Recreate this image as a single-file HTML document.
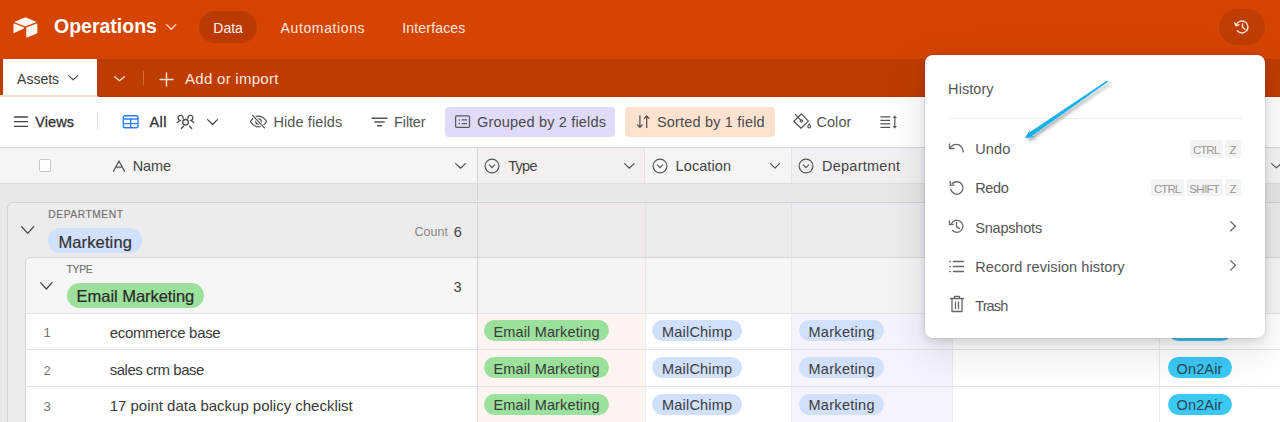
<!DOCTYPE html>
<html><head><meta charset="utf-8"><style>
html,body{margin:0;padding:0;}
body{width:1280px;height:422px;overflow:hidden;position:relative;background:#fff;font-family:"Liberation Sans",sans-serif;}
.t{position:absolute;white-space:nowrap;}
.b{position:absolute;box-sizing:border-box;}
svg.b{overflow:visible;}
</style></head><body>
<div class="b" style="left:0px;top:0px;width:1280px;height:59px;background:#d54401;"></div>
<svg class="b" style="left:12px;top:15.7px;" width="27" height="23" viewBox="0 0 200 170"><path fill="#fff4ee" d="M90 12.4L24.1 39.7c-3.7 1.5-3.6 6.7.1 8.2l66.2 26.3c5.8 2.3 12.3 2.3 18.1 0l66.2-26.3c3.7-1.5 3.7-6.7.1-8.2L108.8 12.4c-6-2.5-12.8-2.5-18.8 0z"/><path fill="#fff4ee" d="M105.3 88.5v65.6c0 3.1 3.1 5.3 6 4.1l73.8-28.6c1.7-.7 2.8-2.3 2.8-4.1V59.8c0-3.1-3.1-5.3-6-4.1l-73.8 28.6c-1.7.7-2.8 2.3-2.8 4.2z"/><path fill="#fff4ee" d="M88.1 91.8L17.7 125.7c-2.9 1.4-6.7-.7-6.7-4V60.1c0-1.2.6-2.2 1.4-3 .3-.3.7-.6 1.1-.8 1.1-.7 2.7-.8 4-.3l70.1 27.8c3.6 1.4 3.9 6.4.4 8z"/></svg>
<div class="t" style="left:54.00px;top:17.09px;font-size:19.5px;line-height:19.5px;color:#fff;font-weight:bold;">Operations</div>
<svg class="b" style="left:163.6px;top:21.8px;" width="14.400000000000006" height="9.899999999999999" viewBox="0 0 14.400000000000006 9.899999999999999"><path d="M2.6 2.6 L7.200000000000003 7.299999999999999 L11.800000000000006 2.6" fill="none" stroke="#fbe3d6" stroke-width="1.2" stroke-linecap="round" stroke-linejoin="round"/></svg>
<div class="b" style="left:198.6px;top:10.9px;width:58.900000000000006px;height:32.1px;background:#ba3a02;border-radius:16px;"></div>
<div class="t" style="left:213.30px;top:20.95px;font-size:14px;line-height:14px;color:#fff4ee;letter-spacing:-0.024px;">Data</div>
<div class="t" style="left:280.60px;top:20.95px;font-size:14px;line-height:14px;color:#fde8dd;letter-spacing:0.618px;">Automations</div>
<div class="t" style="left:402.30px;top:20.95px;font-size:14px;line-height:14px;color:#fde8dd;letter-spacing:0.170px;">Interfaces</div>
<div class="b" style="left:1218.6px;top:9px;width:46.0px;height:35.5px;background:#bf3d02;border-radius:18px;"></div>
<svg class="b" style="left:1232.6px;top:19.2px;" width="18" height="16" viewBox="0 0 18 16"><path d="M3.2 6.2 A6 6 0 1 1 4.3 11.8" fill="none" stroke="#fbe3d6" stroke-width="1.4" stroke-linecap="round"/><path d="M1.8 3.8 L3.0 6.8 L6.0 5.6" fill="none" stroke="#fbe3d6" stroke-width="1.4" stroke-linecap="round" stroke-linejoin="round"/><path d="M9.5 4.8 V8.3 L11.8 10.2" fill="none" stroke="#fbe3d6" stroke-width="1.4" stroke-linecap="round" stroke-linejoin="round"/></svg>
<div class="b" style="left:0px;top:59px;width:3px;height:37.5px;background:#bf3c01;"></div>
<div class="b" style="left:3px;top:59px;width:93.5px;height:37px;background:#fff;border-radius:4px 4px 0 0;"></div>
<div class="b" style="left:0px;top:95px;width:96.5px;height:2px;background:#f1ddd5;"></div>
<div class="b" style="left:96.5px;top:59px;width:1183.5px;height:37.7px;background:#bf3c01;border-radius:0 0 0 3px;box-shadow:inset 0 -1px 0 #b23501;"></div>
<div class="t" style="left:17.10px;top:71.55px;font-size:14px;line-height:14px;color:#3a3a3a;">Assets</div>
<svg class="b" style="left:66.4px;top:73.2px;" width="14.299999999999997" height="9.399999999999991" viewBox="0 0 14.299999999999997 9.399999999999991"><path d="M2.6 2.6 L7.149999999999999 6.799999999999992 L11.699999999999998 2.6" fill="none" stroke="#555" stroke-width="1.2" stroke-linecap="round" stroke-linejoin="round"/></svg>
<svg class="b" style="left:112px;top:74px;" width="15" height="9.299999999999997" viewBox="0 0 15 9.299999999999997"><path d="M2.65 2.65 L7.5 6.649999999999997 L12.35 2.65" fill="none" stroke="#fbe0d2" stroke-width="1.3" stroke-linecap="round" stroke-linejoin="round"/></svg>
<div class="b" style="left:142.5px;top:71px;width:1.0px;height:13.599999999999994px;background:rgba(255,255,255,0.25);"></div>
<svg class="b" style="left:159px;top:71.5px;" width="15" height="15" viewBox="0 0 15 15"><path d="M7.5 1V14M1 7.5H14" stroke="#fde8dd" stroke-width="1.4" stroke-linecap="round"/></svg>
<div class="t" style="left:185.10px;top:71.40px;font-size:15px;line-height:15px;color:#fde8dd;letter-spacing:0.272px;">Add or import</div>
<div class="b" style="left:0px;top:97px;width:1280px;height:50px;background:#fff;"></div>
<svg class="b" style="left:5px;top:105px;" width="30" height="30" viewBox="5 105 30 30"><path d="M14.4 117H27.4M14.4 121.7H27.4M14.4 126.4H27.4" stroke="#444" stroke-width="1.3" stroke-linecap="round"/></svg>
<div class="t" style="left:35.30px;top:114.93px;font-size:14.5px;line-height:14.5px;color:#333;-webkit-text-stroke:0.3px #333;letter-spacing:0.071px;">Views</div>
<div class="b" style="left:97px;top:112.8px;width:1px;height:17.60000000000001px;background:#ddd;"></div>
<svg class="b" style="left:115px;top:110px;" width="30" height="25" viewBox="115 110 30 25"><g fill="none" stroke="#2d7ff9" stroke-width="1.4"><rect x="123.3" y="115.8" width="14.7" height="12" rx="1.8"/><path d="M123.3 119H138M123.3 123.6H138M130.65 119V127.8"/></g></svg>
<div class="t" style="left:149.40px;top:114.93px;font-size:14.5px;line-height:14.5px;color:#333;-webkit-text-stroke:0.3px #333;letter-spacing:0.442px;">All</div>
<svg class="b" style="left:170px;top:110px;" width="30" height="25" viewBox="170 110 30 25"><g fill="none" stroke="#4a4a4a" stroke-width="1.3" stroke-linecap="round"><circle cx="185.5" cy="122.3" r="2.8"/><path d="M181.3 128.5L183.4 126.3M189.6 126.3L191.7 128.5"/><path d="M183.0 118.5A2.5 2.5 0 1 0 180.17 120.36L177.3 122.6"/><path d="M188.0 118.5A2.5 2.5 0 1 1 190.83 120.36L193.7 122.6"/></g></svg>
<svg class="b" style="left:204.8px;top:116.8px;" width="15.099999999999994" height="10.200000000000003" viewBox="0 0 15.099999999999994 10.200000000000003"><path d="M2.65 2.65 L7.549999999999997 7.5500000000000025 L12.449999999999994 2.65" fill="none" stroke="#444" stroke-width="1.3" stroke-linecap="round" stroke-linejoin="round"/></svg>
<svg class="b" style="left:245px;top:110px;" width="30" height="24" viewBox="245 110 30 24"><g fill="none" stroke-linecap="round"><path d="M250.4 121.5C252.6 117.9 255.3 116.1 258.5 116.1S264.4 117.9 266.6 121.5C264.4 125.1 261.7 126.9 258.5 126.9S252.6 125.1 250.4 121.5Z" stroke="#555" stroke-width="1.3"/><circle cx="258.5" cy="121.5" r="2.7" stroke="#555" stroke-width="1.3"/><path d="M252.6 115.4L264.4 127.9" stroke="#fff" stroke-width="3"/><path d="M252.6 115.4L264.4 127.9" stroke="#555" stroke-width="1.3"/></g></svg>
<div class="t" style="left:273.40px;top:114.93px;font-size:14.5px;line-height:14.5px;color:#555;letter-spacing:0.110px;">Hide fields</div>
<svg class="b" style="left:370.5px;top:117px;" width="17" height="10" viewBox="0 0 17 10"><path d="M1 1.2H16M3.8 5H13.2M6.5 8.8H10.5" stroke="#555" stroke-width="1.4" stroke-linecap="round"/></svg>
<div class="t" style="left:394.10px;top:114.93px;font-size:14.5px;line-height:14.5px;color:#555;letter-spacing:-0.144px;">Filter</div>
<div class="b" style="left:444.7px;top:107px;width:170.3px;height:29.599999999999994px;background:#e1dbfb;border-radius:4px;"></div>
<svg class="b" style="left:445px;top:108px;" width="30" height="25" viewBox="445 108 30 25"><g fill="none" stroke="#5a5a5a" stroke-linecap="round"><rect x="455.6" y="115.9" width="13.9" height="11.4" rx="1" stroke-width="1.25"/><path d="M459.3 119.9H459.4M459.3 123.6H459.4" stroke-width="1.5"/><path d="M462.1 119.9H466.6M462.1 123.6H466.6" stroke-width="1.1"/></g></svg>
<div class="t" style="left:477.00px;top:114.93px;font-size:14.5px;line-height:14.5px;color:#4a4a4a;letter-spacing:0.181px;">Grouped by 2 fields</div>
<div class="b" style="left:624.7px;top:107px;width:150.0px;height:29.80000000000001px;background:#fee2d0;border-radius:4px;"></div>
<svg class="b" style="left:625px;top:108px;" width="30" height="25" viewBox="625 108 30 25"><g fill="none" stroke="#555" stroke-width="1.3" stroke-linecap="round" stroke-linejoin="round"><path d="M639.9 116V127M637.6 125L639.9 127.4L642.2 125"/><path d="M646.7 116.2V127.5M644.4 118.4L646.7 116L649 118.4"/></g></svg>
<div class="t" style="left:657.00px;top:114.93px;font-size:14.5px;line-height:14.5px;color:#4a4a4a;letter-spacing:0.176px;">Sorted by 1 field</div>
<svg class="b" style="left:785px;top:108px;" width="30" height="25" viewBox="785 108 30 25"><g fill="none" stroke="#555" stroke-width="1.2" stroke-linejoin="round" stroke-linecap="round"><path d="M801.4 113.8L808.4 121.1L801.1 128.3L793.9 121.2Z"/><circle cx="801.4" cy="121" r="1.2"/><path d="M795.3 114.3L800.6 120.2"/><path d="M809.2 123.9C808.4 125 807.8 125.8 807.8 126.6A1.4 1.4 0 0 0 810.6 126.6C810.6 125.8 810 125 809.2 123.9Z"/></g></svg>
<div class="t" style="left:816.40px;top:114.93px;font-size:14.5px;line-height:14.5px;color:#555;letter-spacing:0.088px;">Color</div>
<svg class="b" style="left:875px;top:110px;" width="25" height="22" viewBox="875 110 25 22"><path d="M880.8 116.8H889.8M880.8 120.3H889.8M880.8 123.8H889.8M880.8 127.3H889.8M894.8 117.5V126.5" fill="none" stroke="#555" stroke-width="1.2" stroke-linecap="round"/><path d="M892.6 118L894.8 115.6L897 118Z M892.6 126L894.8 128.4L897 126Z" fill="#555"/></svg>
<div class="b" style="left:0px;top:147px;width:1280px;height:1px;background:#d6d6d6;"></div>
<div class="b" style="left:0px;top:148px;width:1280px;height:35px;background:#f5f5f5;"></div>
<div class="b" style="left:478px;top:148px;width:166.5px;height:35px;background:#f4f0ef;"></div>
<div class="b" style="left:792px;top:148px;width:161px;height:35px;background:#f2f0f5;"></div>
<div class="b" style="left:0px;top:183px;width:1280px;height:1px;background:#dedede;"></div>
<div class="b" style="left:477px;top:148px;width:1px;height:35px;background:#d4d4d4;"></div>
<div class="b" style="left:644px;top:148px;width:1px;height:35px;background:#e4e4e4;"></div>
<div class="b" style="left:791px;top:148px;width:1px;height:35px;background:#e4e4e4;"></div>
<div class="b" style="left:952px;top:148px;width:1px;height:35px;background:#e4e4e4;"></div>
<div class="b" style="left:1159px;top:148px;width:1px;height:35px;background:#e4e4e4;"></div>
<div class="b" style="left:39px;top:159px;width:12px;height:13px;border:1px solid #c2c8cc;border-radius:2px;background:#fff"></div>
<svg class="b" style="left:111.5px;top:160px;" width="14" height="12" viewBox="0 0 14 12"><path d="M1.5 11.2L7 1L12.5 11.2M3.8 7.2H10.2" fill="none" stroke="#555" stroke-width="1.3" stroke-linecap="round" stroke-linejoin="round"/></svg>
<div class="t" style="left:132.75px;top:158.73px;font-size:14.5px;line-height:14.5px;color:#444;letter-spacing:-0.142px;">Name</div>
<svg class="b" style="left:453px;top:160.7px;" width="15" height="9.800000000000011" viewBox="0 0 15 9.800000000000011"><path d="M2.6 2.6 L7.5 7.200000000000012 L12.4 2.6" fill="none" stroke="#555" stroke-width="1.2" stroke-linecap="round" stroke-linejoin="round"/></svg>
<svg class="b" style="left:483.8px;top:157.6px;" width="16" height="16" viewBox="0 0 16 16"><circle cx="8" cy="8" r="6.9" fill="none" stroke="#555" stroke-width="1.2"/><path d="M5.3 6.9L8 9.6L10.7 6.9" fill="none" stroke="#555" stroke-width="1.2" stroke-linecap="round" stroke-linejoin="round"/></svg>
<div class="t" style="left:508.20px;top:159.33px;font-size:14.5px;line-height:14.5px;color:#444;letter-spacing:-0.711px;">Type</div>
<svg class="b" style="left:621.6px;top:160.7px;" width="14.600000000000023" height="9.800000000000011" viewBox="0 0 14.600000000000023 9.800000000000011"><path d="M2.6 2.6 L7.300000000000011 7.200000000000012 L12.000000000000023 2.6" fill="none" stroke="#555" stroke-width="1.2" stroke-linecap="round" stroke-linejoin="round"/></svg>
<svg class="b" style="left:652.3px;top:157.6px;" width="16" height="16" viewBox="0 0 16 16"><circle cx="8" cy="8" r="6.9" fill="none" stroke="#555" stroke-width="1.2"/><path d="M5.3 6.9L8 9.6L10.7 6.9" fill="none" stroke="#555" stroke-width="1.2" stroke-linecap="round" stroke-linejoin="round"/></svg>
<div class="t" style="left:675.60px;top:159.33px;font-size:14.5px;line-height:14.5px;color:#444;letter-spacing:0.083px;">Location</div>
<svg class="b" style="left:768px;top:160.7px;" width="14" height="9.800000000000011" viewBox="0 0 14 9.800000000000011"><path d="M2.6 2.6 L7.0 7.200000000000012 L11.4 2.6" fill="none" stroke="#555" stroke-width="1.2" stroke-linecap="round" stroke-linejoin="round"/></svg>
<svg class="b" style="left:798.4px;top:157.6px;" width="16" height="16" viewBox="0 0 16 16"><circle cx="8" cy="8" r="6.9" fill="none" stroke="#555" stroke-width="1.2"/><path d="M5.3 6.9L8 9.6L10.7 6.9" fill="none" stroke="#555" stroke-width="1.2" stroke-linecap="round" stroke-linejoin="round"/></svg>
<div class="t" style="left:822.00px;top:159.33px;font-size:14.5px;line-height:14.5px;color:#444;letter-spacing:0.250px;">Department</div>
<svg class="b" style="left:1269.3px;top:161px;" width="14.700000000000045" height="9.5" viewBox="0 0 14.700000000000045 9.5"><path d="M2.6 2.6 L7.350000000000023 6.9 L12.100000000000046 2.6" fill="none" stroke="#555" stroke-width="1.2" stroke-linecap="round" stroke-linejoin="round"/></svg>
<div class="b" style="left:0px;top:184px;width:1280px;height:17px;background:#e7e7e7;"></div>
<div class="b" style="left:477px;top:184px;width:1px;height:238px;background:#d2d2d2;"></div>
<div class="b" style="left:0px;top:201px;width:1280px;height:221px;background:#e8e8e8;"></div>
<div class="b" style="left:6.5px;top:201.5px;width:1300px;height:400px;border:1px solid #d3d3d3;border-radius:6px;background:#ececec"></div>
<div class="b" style="left:478px;top:202.5px;width:166.5px;height:55.0px;background:#eeeae9;"></div>
<div class="b" style="left:645.5px;top:202.5px;width:145.5px;height:55.0px;background:#ebebeb;"></div>
<div class="b" style="left:792px;top:202.5px;width:161px;height:55.0px;background:#edebf0;"></div>
<div class="b" style="left:477px;top:202.5px;width:1px;height:55.0px;background:#d2d2d2;"></div>
<div class="b" style="left:644.5px;top:202.5px;width:1.0px;height:55.0px;background:#e2e2e2;"></div>
<div class="b" style="left:791px;top:202.5px;width:1px;height:55.0px;background:#e2e2e2;"></div>
<div class="b" style="left:952px;top:202.5px;width:1px;height:55.0px;background:#e2e2e2;"></div>
<div class="b" style="left:1159px;top:202.5px;width:1px;height:55.0px;background:#e2e2e2;"></div>
<div class="t" style="left:48.30px;top:209.88px;font-size:10.3px;line-height:10.3px;color:#707070;-webkit-text-stroke:0.15px #707070;letter-spacing:0.521px;">DEPARTMENT</div>
<svg class="b" style="left:19.3px;top:224.1px;" width="17.400000000000002" height="12.0" viewBox="0 0 17.400000000000002 12.0"><path d="M2.65 2.65 L8.700000000000001 9.35 L14.750000000000002 2.65" fill="none" stroke="#444" stroke-width="1.3" stroke-linecap="round" stroke-linejoin="round"/></svg>
<div class="b" style="left:48.3px;top:228.2px;width:93.3px;height:24.600000000000023px;background:#d0e0fd;border-radius:12.300000000000011px;"></div>
<div class="t" style="left:58.40px;top:233.73px;font-size:16.5px;line-height:16.5px;color:#333;-webkit-text-stroke:0.2px #333;letter-spacing:0.132px;">Marketing</div>
<div class="t" style="left:414.40px;top:226.32px;font-size:12.5px;line-height:12.5px;color:#888;letter-spacing:0.087px;">Count</div>
<div class="t" style="left:453.80px;top:224.63px;font-size:14.5px;line-height:14.5px;color:#444;letter-spacing:-0.663px;">6</div>
<div class="b" style="left:25px;top:257px;width:1300px;height:400px;border:1px solid #d6d6d6;border-radius:5px;background:#f6f6f6"></div>
<div class="b" style="left:478px;top:258px;width:166.5px;height:55px;background:#f7f3f2;"></div>
<div class="b" style="left:645.5px;top:258px;width:145.5px;height:55px;background:#f6f6f6;"></div>
<div class="b" style="left:792px;top:258px;width:161px;height:55px;background:#f5f3f8;"></div>
<div class="b" style="left:477px;top:258px;width:1px;height:55px;background:#d6d6d6;"></div>
<div class="b" style="left:644.5px;top:258px;width:1.0px;height:55px;background:#e6e6e6;"></div>
<div class="b" style="left:791px;top:258px;width:1px;height:55px;background:#e6e6e6;"></div>
<div class="b" style="left:952px;top:258px;width:1px;height:55px;background:#e6e6e6;"></div>
<div class="b" style="left:1159px;top:258px;width:1px;height:55px;background:#e6e6e6;"></div>
<div class="t" style="left:66.60px;top:264.78px;font-size:10.3px;line-height:10.3px;color:#707070;-webkit-text-stroke:0.15px #707070;letter-spacing:-0.267px;">TYPE</div>
<svg class="b" style="left:38px;top:279.5px;" width="16.700000000000003" height="11.699999999999989" viewBox="0 0 16.700000000000003 11.699999999999989"><path d="M2.65 2.65 L8.350000000000001 9.049999999999988 L14.050000000000002 2.65" fill="none" stroke="#444" stroke-width="1.3" stroke-linecap="round" stroke-linejoin="round"/></svg>
<div class="b" style="left:66.5px;top:283px;width:137.5px;height:25.100000000000023px;background:#9be09b;border-radius:12.550000000000011px;"></div>
<div class="t" style="left:76.60px;top:287.73px;font-size:16.5px;line-height:16.5px;color:#2a2a2a;-webkit-text-stroke:0.2px #2a2a2a;letter-spacing:-0.042px;">Email Marketing</div>
<div class="t" style="left:453.40px;top:280.13px;font-size:14.5px;line-height:14.5px;color:#444;letter-spacing:-0.263px;">3</div>
<div class="b" style="left:26px;top:313px;width:1254px;height:109px;background:#fff;"></div>
<div class="b" style="left:478px;top:313px;width:166.5px;height:109px;background:#fef4f1;"></div>
<div class="b" style="left:792px;top:313px;width:161px;height:109px;background:#f6f3fe;"></div>
<div class="b" style="left:26px;top:313px;width:1254px;height:1px;background:#e4e4e4;"></div>
<div class="b" style="left:26px;top:349px;width:1254px;height:1px;background:#e4e4e4;"></div>
<div class="b" style="left:26px;top:386px;width:1254px;height:1px;background:#e4e4e4;"></div>
<div class="b" style="left:644.5px;top:313px;width:1.0px;height:109px;background:#ececec;"></div>
<div class="b" style="left:791px;top:313px;width:1px;height:109px;background:#ececec;"></div>
<div class="b" style="left:952px;top:313px;width:1px;height:109px;background:#ececec;"></div>
<div class="b" style="left:1159px;top:313px;width:1px;height:109px;background:#ececec;"></div>
<div class="b" style="left:477px;top:313px;width:1px;height:109px;background:#d8d8d8;"></div>
<div class="t" style="left:43.40px;top:326.30px;font-size:13px;line-height:13px;color:#777;">1</div>
<div class="t" style="left:109.70px;top:324.60px;font-size:15px;line-height:15px;color:#3a3a3a;letter-spacing:-0.311px;">ecommerce base</div>
<div class="b" style="left:483.9px;top:320.2px;width:125.20000000000005px;height:20.80000000000001px;background:#9be09b;border-radius:10.400000000000006px;"></div>
<div class="t" style="left:493.50px;top:324.63px;font-size:14.5px;line-height:14.5px;color:#3a3a3a;letter-spacing:0.147px;">Email Marketing</div>
<div class="b" style="left:652.2px;top:320.2px;width:89.39999999999998px;height:20.80000000000001px;background:#d0e0fd;border-radius:10.400000000000006px;"></div>
<div class="t" style="left:662.10px;top:324.63px;font-size:14.5px;line-height:14.5px;color:#3d3d3d;letter-spacing:0.190px;">MailChimp</div>
<div class="b" style="left:798.75px;top:320.2px;width:85.54999999999995px;height:20.80000000000001px;background:#d0e0fd;border-radius:10.400000000000006px;"></div>
<div class="t" style="left:808.50px;top:324.63px;font-size:14.5px;line-height:14.5px;color:#3d3d3d;letter-spacing:0.293px;">Marketing</div>
<div class="b" style="left:1167.5px;top:320.2px;width:64.09999999999991px;height:20.80000000000001px;background:#3bc8f6;border-radius:10.400000000000006px;"></div>
<div class="t" style="left:1176.60px;top:324.63px;font-size:14.5px;line-height:14.5px;color:#2a4652;letter-spacing:0.115px;">On2Air</div>
<div class="t" style="left:43.40px;top:363.50px;font-size:13px;line-height:13px;color:#777;">2</div>
<div class="t" style="left:109.70px;top:361.80px;font-size:15px;line-height:15px;color:#3a3a3a;letter-spacing:-0.474px;">sales crm base</div>
<div class="b" style="left:483.9px;top:357.3px;width:125.20000000000005px;height:20.80000000000001px;background:#9be09b;border-radius:10.400000000000006px;"></div>
<div class="t" style="left:493.50px;top:361.83px;font-size:14.5px;line-height:14.5px;color:#3a3a3a;letter-spacing:0.147px;">Email Marketing</div>
<div class="b" style="left:652.2px;top:357.3px;width:89.39999999999998px;height:20.80000000000001px;background:#d0e0fd;border-radius:10.400000000000006px;"></div>
<div class="t" style="left:662.10px;top:361.83px;font-size:14.5px;line-height:14.5px;color:#3d3d3d;letter-spacing:0.190px;">MailChimp</div>
<div class="b" style="left:798.75px;top:357.3px;width:85.54999999999995px;height:20.80000000000001px;background:#d0e0fd;border-radius:10.400000000000006px;"></div>
<div class="t" style="left:808.50px;top:361.83px;font-size:14.5px;line-height:14.5px;color:#3d3d3d;letter-spacing:0.293px;">Marketing</div>
<div class="b" style="left:1167.5px;top:357.3px;width:64.09999999999991px;height:20.80000000000001px;background:#3bc8f6;border-radius:10.400000000000006px;"></div>
<div class="t" style="left:1176.60px;top:361.83px;font-size:14.5px;line-height:14.5px;color:#2a4652;letter-spacing:0.115px;">On2Air</div>
<div class="t" style="left:43.40px;top:399.80px;font-size:13px;line-height:13px;color:#777;">3</div>
<div class="t" style="left:109.70px;top:398.10px;font-size:15px;line-height:15px;color:#3a3a3a;letter-spacing:-0.013px;">17 point data backup policy checklist</div>
<div class="b" style="left:483.9px;top:394.2px;width:125.20000000000005px;height:20.80000000000001px;background:#9be09b;border-radius:10.400000000000006px;"></div>
<div class="t" style="left:493.50px;top:398.13px;font-size:14.5px;line-height:14.5px;color:#3a3a3a;letter-spacing:0.147px;">Email Marketing</div>
<div class="b" style="left:652.2px;top:394.2px;width:89.39999999999998px;height:20.80000000000001px;background:#d0e0fd;border-radius:10.400000000000006px;"></div>
<div class="t" style="left:662.10px;top:398.13px;font-size:14.5px;line-height:14.5px;color:#3d3d3d;letter-spacing:0.190px;">MailChimp</div>
<div class="b" style="left:798.75px;top:394.2px;width:85.54999999999995px;height:20.80000000000001px;background:#d0e0fd;border-radius:10.400000000000006px;"></div>
<div class="t" style="left:808.50px;top:398.13px;font-size:14.5px;line-height:14.5px;color:#3d3d3d;letter-spacing:0.293px;">Marketing</div>
<div class="b" style="left:1167.5px;top:394.2px;width:64.09999999999991px;height:20.80000000000001px;background:#3bc8f6;border-radius:10.400000000000006px;"></div>
<div class="t" style="left:1176.60px;top:398.13px;font-size:14.5px;line-height:14.5px;color:#2a4652;letter-spacing:0.115px;">On2Air</div>
<div class="b" style="left:924.5px;top:54.5px;width:340.5px;height:283.5px;background:#fff;border-radius:8px;box-shadow:0 0 0 1px rgba(0,0,0,0.05),0 3px 10px rgba(0,0,0,0.13),0 14px 44px rgba(0,0,0,0.11)"></div>
<div class="t" style="left:948.10px;top:82.13px;font-size:14.5px;line-height:14.5px;color:#555;letter-spacing:0.064px;">History</div>
<div class="b" style="left:947.5px;top:118px;width:294.5px;height:1px;background:#eeeeee;"></div>
<svg class="b" style="left:947px;top:142px;" width="19" height="12" viewBox="0 0 19 12"><path d="M2.5 2V6.5H7" fill="none" stroke="#666" stroke-width="1.3" stroke-linecap="round" stroke-linejoin="round"/><path d="M2.7 6.3C4.5 3.6 6.6 2.3 9.5 2.3C12.8 2.3 15.4 4.6 16.3 9.8" fill="none" stroke="#666" stroke-width="1.3" stroke-linecap="round"/></svg>
<div class="t" style="left:975.20px;top:142.03px;font-size:14.5px;line-height:14.5px;color:#555;letter-spacing:0.113px;">Undo</div>
<div class="b" style="left:1190.1px;top:139.9px;width:32.80000000000018px;height:17.69999999999999px;background:#f3f3f3;border-radius:3px;"></div>
<div class="t" style="left:1192.90px;top:144.57px;font-size:11.5px;line-height:11.5px;color:#999;letter-spacing:-0.943px;">CTRL</div>
<div class="b" style="left:1225.2px;top:139.9px;width:15.700000000000045px;height:17.69999999999999px;background:#f3f3f3;border-radius:3px;"></div>
<div class="t" style="left:1229.40px;top:144.57px;font-size:11.5px;line-height:11.5px;color:#999;letter-spacing:-0.124px;">Z</div>
<svg class="b" style="left:947.5px;top:180px;" width="18" height="16" viewBox="0 0 18 16"><path d="M4.2 3.8A6.2 6.2 0 1 1 2.8 9.5" fill="none" stroke="#666" stroke-width="1.3" stroke-linecap="round"/><path d="M2.2 1.5V5.2H5.9" fill="none" stroke="#666" stroke-width="1.3" stroke-linecap="round" stroke-linejoin="round"/></svg>
<div class="t" style="left:975.20px;top:180.93px;font-size:14.5px;line-height:14.5px;color:#555;letter-spacing:-0.387px;">Redo</div>
<div class="b" style="left:1151.2px;top:178.9px;width:32.700000000000045px;height:17.400000000000006px;background:#f3f3f3;border-radius:3px;"></div>
<div class="t" style="left:1154.00px;top:183.57px;font-size:11.5px;line-height:11.5px;color:#999;letter-spacing:-0.943px;">CTRL</div>
<div class="b" style="left:1186.5px;top:178.9px;width:36.200000000000045px;height:17.400000000000006px;background:#f3f3f3;border-radius:3px;"></div>
<div class="t" style="left:1189.30px;top:183.57px;font-size:11.5px;line-height:11.5px;color:#999;letter-spacing:-0.655px;">SHIFT</div>
<div class="b" style="left:1225.2px;top:178.9px;width:15.700000000000045px;height:17.400000000000006px;background:#f3f3f3;border-radius:3px;"></div>
<div class="t" style="left:1229.40px;top:183.57px;font-size:11.5px;line-height:11.5px;color:#999;letter-spacing:-0.124px;">Z</div>
<svg class="b" style="left:944px;top:215px;" width="26" height="23" viewBox="944 215 26 23"><g fill="none" stroke="#666" stroke-width="1.3" stroke-linecap="round" stroke-linejoin="round"><path d="M952.6 230.5A6 6 0 1 0 951.6 223.5"/><path d="M949.4 220.8L949.6 224.6L953.2 224.3"/><path d="M956.5 222.3V226.6L959.5 228.6"/></g></svg>
<div class="t" style="left:975.20px;top:220.73px;font-size:14.5px;line-height:14.5px;color:#555;letter-spacing:-0.190px;">Snapshots</div>
<svg class="b" style="left:1227.9px;top:219px;" width="10.099999999999909" height="14.400000000000006" viewBox="0 0 10.099999999999909 14.400000000000006"><path d="M2.65 2.65 L7.449999999999909 7.200000000000003 L2.65 11.750000000000005" fill="none" stroke="#666" stroke-width="1.3" stroke-linecap="round" stroke-linejoin="round"/></svg>
<svg class="b" style="left:948px;top:260px;" width="17" height="13" viewBox="0 0 17 13"><path d="M1.8 1.5H2.3M1.8 6.5H2.3M1.8 11.5H2.3M5.5 1.5H15.5M5.5 6.5H15.5M5.5 11.5H15.5" stroke="#666" stroke-width="1.3" stroke-linecap="round"/></svg>
<div class="t" style="left:975.20px;top:259.53px;font-size:14.5px;line-height:14.5px;color:#555;letter-spacing:0.088px;">Record revision history</div>
<svg class="b" style="left:1227.9px;top:258.3px;" width="10.099999999999909" height="14.800000000000011" viewBox="0 0 10.099999999999909 14.800000000000011"><path d="M2.65 2.65 L7.449999999999909 7.400000000000006 L2.65 12.150000000000011" fill="none" stroke="#666" stroke-width="1.3" stroke-linecap="round" stroke-linejoin="round"/></svg>
<svg class="b" style="left:948.5px;top:295px;" width="16" height="18" viewBox="0 0 16 18"><path d="M1.5 3.5H14.5M5.5 3.5V1.3H10.5V3.5M3 3.5V16.5H13V3.5M6.5 7V13.5M9.5 7V13.5" fill="none" stroke="#666" stroke-width="1.3" stroke-linecap="round" stroke-linejoin="round"/></svg>
<div class="t" style="left:975.20px;top:298.93px;font-size:14.5px;line-height:14.5px;color:#555;letter-spacing:-0.881px;">Trash</div>
<svg class="b" style="left:1015px;top:72px;" width="100" height="75" viewBox="1015 72 100 75"><defs><filter id="sh" x="-30%" y="-30%" width="160%" height="160%"><feDropShadow dx="2" dy="2.5" stdDeviation="1.8" flood-color="#000" flood-opacity="0.32"/></filter></defs><g filter="url(#sh)"><path d="M1107.15 80.54 L1029.32 132.42 L1030.24 129.35 L1024.80 138.20 L1034.99 136.77 L1031.81 136.04 L1108.05 81.86 Z" fill="#19b1e9"/></g></svg>
</body></html>
